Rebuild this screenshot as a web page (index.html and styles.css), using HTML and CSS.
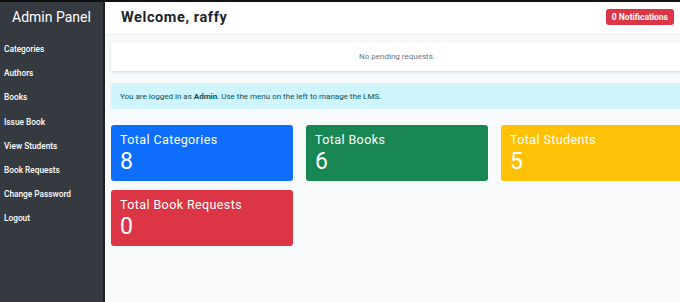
FILE: index.html
```html
<!DOCTYPE html>
<html lang="en">
<head>
  <meta charset="UTF-8">
  <meta name="viewport" content="width=device-width, initial-scale=1.0">
  <title>Admin Dashboard</title>
  <link rel="stylesheet" href="styles.css">
</head>
<body>
  <div id="side-nav">
    <div class="brand">Admin Panel</div>
    <a class="menu-link" href="#">Categories</a>
    <a class="menu-link" href="#">Authors</a>
    <a class="menu-link" href="#">Books</a>
    <a class="menu-link" href="#">Issue Book</a>
    <a class="menu-link" href="#">View Students</a>
    <a class="menu-link" href="#">Book Requests</a>
    <a class="menu-link" href="#">Change Password</a>
    <a class="menu-link" href="#">Logout</a>
  </div>
  <div class="main">
    <div class="topbar">
      <span class="welcome">Welcome, raffy</span>
      <span class="badge">0 Notifications</span>
    </div>
    <div class="content">
      <div class="requests">No pending requests.</div>
      <div class="alert">You are logged in as <b>Admin</b>. Use the menu on the left to manage the LMS.</div>
      <div class="stats">
        <div class="stat blue">
          <div class="stat-title">Total Categories</div>
          <div class="stat-num">8</div>
        </div>
        <div class="stat green">
          <div class="stat-title">Total Books</div>
          <div class="stat-num">6</div>
        </div>
        <div class="stat yellow">
          <div class="stat-title">Total Students</div>
          <div class="stat-num">5</div>
        </div>
        <div class="stat red">
          <div class="stat-title">Total Book Requests</div>
          <div class="stat-num">0</div>
        </div>
      </div>
    </div>
  </div>
</body>
</html>
```

FILE: styles.css
```css
html, body {
  margin: 0;
  height: 100%;
}
body {
  font-family: Roboto, "Liberation Sans", sans-serif;
  display: flex;
  background-color: #f8f9fa;
  border-top: 2px solid #111;
  box-sizing: border-box;
  overflow: hidden;
}
#side-nav {
  background-color: #343a40;
  width: 103px;
  flex-shrink: 0;
  border-right: 2px solid #1d2124;
  display: flex;
  flex-direction: column;
}
.brand {
  color: #fff;
  font-size: 14px;
  text-align: center;
  padding: 7px 0 12px;
}
.menu-link {
  color: #fff;
  text-decoration: none;
  font-size: 8.3px;
  font-weight: 500;
  padding: 0 4px;
  height: 24.2px;
  line-height: 24.2px;
}
.main {
  width: 578px;
  flex-shrink: 0;
}
.topbar {
  background-color: #fff;
  height: 32px;
  display: flex;
  align-items: center;
  justify-content: space-between;
  padding: 0 9px 0 16px;
  border-bottom: 1px solid #eceff1;
}
.welcome {
  font-size: 14.5px;
  font-weight: 700;
  letter-spacing: 0.6px;
  color: #212529;
  margin-top: -2px;
}
.badge {
  background-color: #dc3545;
  color: #fff;
  font-size: 8.5px;
  font-weight: 700;
  border-radius: 3px;
  padding: 3px 6px;
  margin-top: -2px;
}
.content {
  padding: 7px 0 0 6px;
}
.requests {
  background-color: #fff;
  box-shadow: 0 1px 3px rgba(0,0,0,0.15);
  border-radius: 3px;
  height: 29px;
  line-height: 30px;
  text-align: center;
  font-size: 8px;
  color: #6c757d;
}
.alert {
  margin-top: 12px;
  background-color: #cff4fc;
  border-radius: 3px;
  height: 26px;
  line-height: 27px;
  padding-left: 9px;
  font-size: 8px;
  color: #055160;
}
.stats {
  margin-top: 16px;
  display: grid;
  grid-template-columns: repeat(3, 182px);
  column-gap: 13px;
  row-gap: 9px;
}
.stat {
  height: 56px;
  border-radius: 3px;
  color: #fff;
  padding: 7px 9px 0;
  box-sizing: border-box;
}
.stat-title {
  font-size: 12.5px;
  letter-spacing: 0.4px;
}
.stat-num {
  font-size: 23px;
  line-height: 29px;
}
.blue {
  background-color: #0d6efd;
}
.green {
  background-color: #198754;
}
.yellow {
  background-color: #ffc107;
}
.red {
  background-color: #dc3545;
}
```
